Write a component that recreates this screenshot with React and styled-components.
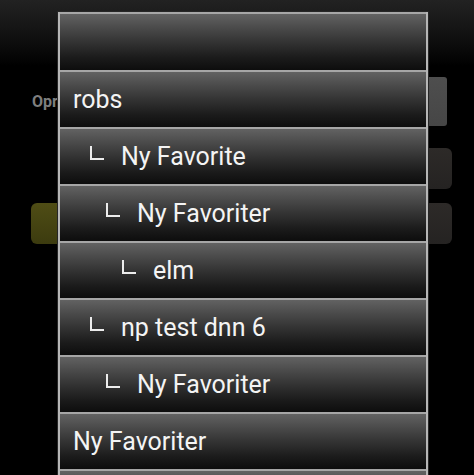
import styled, { createGlobalStyle } from 'styled-components';

const GlobalStyle = createGlobalStyle`
  html, body {
    margin: 0;
    padding: 0;
    background: #000;
    overflow: hidden;
  }
  body {
    font-family: Roboto, "Liberation Sans", sans-serif;
  }
`;

const items = [
  { label: '', level: 0 },
  { label: 'robs', level: 0 },
  { label: 'Ny Favorite', level: 1 },
  { label: 'Ny Favoriter', level: 2 },
  { label: 'elm', level: 3 },
  { label: 'np test dnn 6', level: 1 },
  { label: 'Ny Favoriter', level: 2 },
  { label: 'Ny Favoriter', level: 0 },
  { label: '', level: 0 },
];

const App = () => {
  return (
    <>
      <GlobalStyle />
      <Screen>
        <TitleBar />
        <Form>
          <FormRow $top={11}>
            <FieldLabel>Opr</FieldLabel>
            <InputBox />
          </FormRow>
          <FormRow $top={22}>
            <span />
            <DarkButton />
          </FormRow>
          <FormRow $top={14}>
            <OliveButton />
            <DarkButton />
          </FormRow>
        </Form>

        <Dropdown>
          <List>
            {items.map((item, i) => (
              <Item key={i} $level={item.level}>
                {item.level > 0 ? <Corner /> : null}
                <ItemText>{item.label}</ItemText>
              </Item>
            ))}
          </List>
        </Dropdown>
      </Screen>
    </>
  );
};

export default App;

const Screen = styled.div`
  position: relative;
  width: 474px;
  height: 475px;
  overflow: hidden;
  background: #000;
`;

const TitleBar = styled.div`
  height: 66px;
  background: linear-gradient(to bottom, #222 0%, #161616 40%, #060606 85%, #000 100%);
`;

const Form = styled.div`
  display: flex;
  flex-direction: column;
  padding: 0 22px 0 31px;
`;

const FormRow = styled.div`
  display: flex;
  align-items: center;
  justify-content: space-between;
  margin-top: ${(p) => p.$top}px;
`;

const FieldLabel = styled.span`
  padding-left: 1px;
  font-size: 16px;
  font-weight: bold;
  color: #7e7e7e;
`;

const InputBox = styled.div`
  width: 60px;
  height: 49px;
  margin-right: 5px;
  border-radius: 3px;
  background: linear-gradient(to bottom, #4e4e4e, #464646);
`;

const DarkButton = styled.div`
  width: 60px;
  height: 41px;
  border-radius: 6px;
  background: linear-gradient(to bottom, #2d2a28, #252322);
`;

const OliveButton = styled.div`
  width: 60px;
  height: 41px;
  border-radius: 6px;
  background: linear-gradient(to bottom, #4f4d15, #3c3b0f);
`;

const Dropdown = styled.div`
  position: absolute;
  left: 57px;
  top: 11px;
  width: 372px;
  box-sizing: border-box;
  border: 1px solid #262626;
  border-bottom: none;
  background: #000;
`;

const List = styled.div`
  display: flex;
  flex-direction: column;
  border-left: 2px solid #b6b6b6;
  border-right: 2px solid #b6b6b6;
`;

const Item = styled.div`
  display: flex;
  align-items: center;
  box-sizing: border-box;
  height: 57px;
  padding-left: ${(p) => 13 + p.$level * 16}px;
  border-top: 2px solid #a6a6a6;
  background: linear-gradient(
    to bottom,
    #626262 0%,
    #4a4a4a 25%,
    #333 50%,
    #1b1b1b 78%,
    #0d0d0d 100%
  );

  &:first-child {
    height: 58px;
  }
`;

const Corner = styled.span`
  flex: none;
  width: 12px;
  height: 12px;
  margin: 0 17px 7px 1px;
  border-left: 2px solid #ececec;
  border-bottom: 2px solid #ececec;
`;

const ItemText = styled.span`
  font-size: 25px;
  color: #f4f4f4;
  white-space: nowrap;
`;
